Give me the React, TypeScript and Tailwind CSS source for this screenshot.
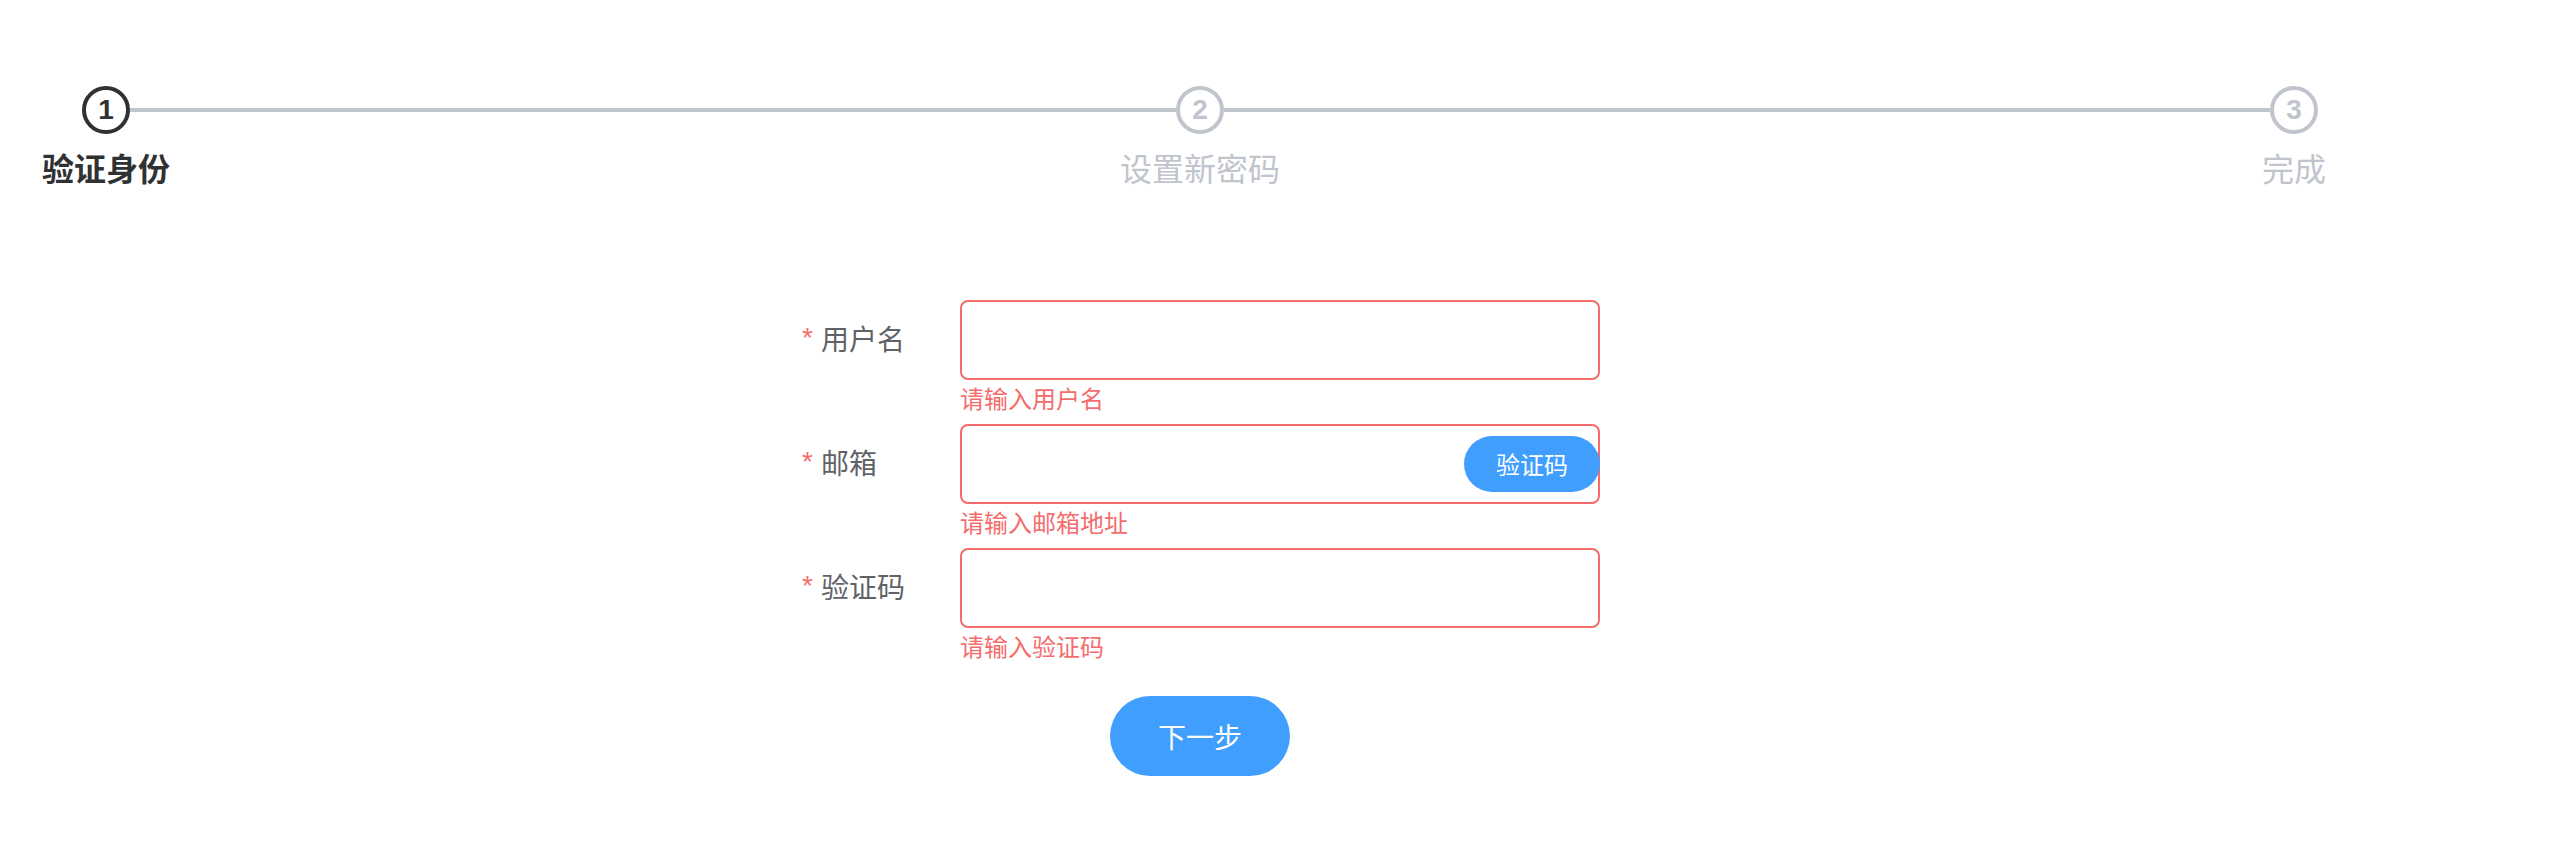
const steps = [
  { n: "1", title: "验证身份", active: true },
  { n: "2", title: "设置新密码", active: false },
  { n: "3", title: "完成", active: false },
];

const fields = [
  { label: "用户名", error: "请输入用户名", code: false },
  { label: "邮箱", error: "请输入邮箱地址", code: true },
  { label: "验证码", error: "请输入验证码", code: false },
];

const StepIcon = ({ n, active }: { n: string; active: boolean }) => (
  <div
    className={`box-border w-[48px] h-[48px] rounded-full border-4 flex items-center justify-center bg-white text-[28px] font-semibold font-['Liberation_Sans',sans-serif] ${
      active ? "border-[#303133] text-[#303133]" : "border-[#c0c4cc] text-[#c0c4cc]"
    }`}
  >
    {n}
  </div>
);

const App = () => {
  return (
    <div className="w-[2552px] h-[842px] bg-white font-['Noto_Sans_CJK_SC',sans-serif]">
      <div className="pt-[86px]">
        <div className="flex items-center ml-[82px] w-[2236px]">
          <StepIcon n="1" active />
          <div className="flex-1 h-[4px] bg-[#c0c4cc]"></div>
          <StepIcon n="2" active={false} />
          <div className="flex-1 h-[4px] bg-[#c0c4cc]"></div>
          <StepIcon n="3" active={false} />
        </div>
        <div className="flex justify-between ml-[6px] w-[2388px]">
          {steps.map((s) => (
            <div
              key={s.n}
              className={`w-[200px] text-center text-[32px] leading-[66px] ${
                s.active ? "text-[#303133] font-bold" : "text-[#c0c4cc]"
              }`}
            >
              {s.title}
            </div>
          ))}
        </div>
      </div>

      <div className="mt-[100px] ml-[800px] w-[800px]">
        {fields.map((f) => (
          <div key={f.label}>
            <div className="flex items-center">
              <div className="w-[160px] pl-[2px] pb-[5px] text-[28px] text-[#606266] flex items-center">
                <span className="text-[#f56c6c] mr-[8px] font-['Liberation_Sans',sans-serif]">*</span>
                {f.label}
              </div>
              <div className="relative box-border w-[640px] h-[80px] border-2 border-[#f56c6c] rounded-[8px] bg-white">
                {f.code && (
                  <button className="absolute right-[-2px] top-1/2 -translate-y-1/2 w-[136px] h-[56px] rounded-full bg-[#409eff] text-white text-[24px]">
                    验证码
                  </button>
                )}
              </div>
            </div>
            <div className="h-[44px] ml-[160px] pt-[6px] text-[24px] leading-[24px] text-[#f56c6c]">
              {f.error}
            </div>
          </div>
        ))}
        <div className="flex justify-center mt-[24px]">
          <button className="w-[180px] h-[80px] rounded-full bg-[#409eff] text-white text-[28px]">
            下一步
          </button>
        </div>
      </div>
    </div>
  );
};

export default App;
